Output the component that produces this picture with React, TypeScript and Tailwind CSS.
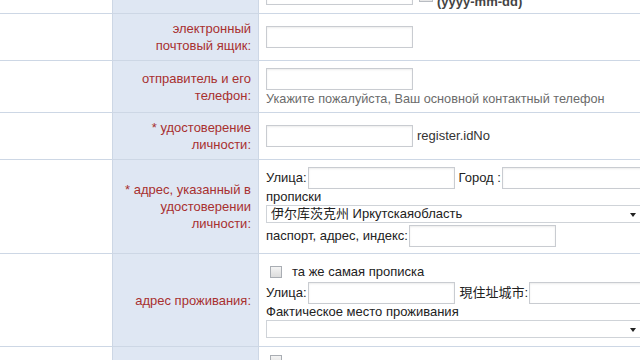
import React from 'react';

const font = { fontFamily: '"Liberation Sans", Arial, "Noto Sans CJK SC", sans-serif' };

const Input: React.FC<{ className?: string }> = ({ className = '' }) => (
  <div className={`h-[22px] w-[147px] shrink-0 border border-[#c9ccd1] bg-white shadow-[inset_0_1px_2px_rgba(0,0,0,0.08)] ${className}`} />
);

const Select: React.FC<{ text?: string }> = ({ text }) => (
  <div className="relative flex h-[18px] w-[376px] shrink-0 items-center border border-[#cfd3d8] bg-white pl-[4px] text-[13px] text-[#222]">
    {text}
    <span className="absolute right-[5px] top-[7px] h-0 w-0 border-x-[3px] border-t-[4px] border-x-transparent border-t-[#222]" />
  </div>
);

const Checkbox: React.FC = () => (
  <div className="h-[12px] w-[12px] shrink-0 border border-[#a9adb3] bg-gradient-to-b from-[#f4f4f4] to-[#dcdcdc]" />
);

const Row: React.FC<{ h: string; label?: React.ReactNode; children?: React.ReactNode; pad?: string }> = ({ h, label, children, pad = 'items-center' }) => (
  <div className={`flex ${h} border-b border-[#cdd7e5]`}>
    <div className="w-[112px] shrink-0 bg-white" />
    <div className="flex w-[147px] shrink-0 items-center justify-end border-l border-r border-[#cdd7e5] bg-[#dfe7f3] pr-[7px] text-right text-[13px] leading-[17px] text-[#a8302f]">
      {label}
    </div>
    <div className={`flex min-w-0 flex-1 overflow-hidden whitespace-nowrap bg-white pl-[7px] ${pad}`}>{children}</div>
  </div>
);

export default function App() {
  return (
    <div className="h-[360px] w-[640px] overflow-hidden bg-white" style={font}>
      {/* partially visible top row */}
      <div className="flex h-[14px] border-b border-[#cdd7e5]">
        <div className="w-[112px] shrink-0 bg-white" />
        <div className="w-[147px] shrink-0 border-l border-r border-[#cdd7e5] bg-[#dfe7f3]" />
        <div className="flex flex-1 items-end overflow-hidden whitespace-nowrap pb-[8px] pl-[7px]">
          <Input />
          <div className="ml-[6px] mb-[3px] h-[9px] w-[14px] border border-[#b8bcc2] bg-[#e8e8e8]" />
          <span className="ml-[4px] mb-[-4px] text-[13px] font-bold leading-[14px] text-[#444]">(yyyy-mm-dd)</span>
        </div>
      </div>

      <Row h="h-[47px]" label={<>электронный<br />почтовый ящик:</>}>
        <Input />
      </Row>

      <Row h="h-[52px]" label={<>отправитель и его<br />телефон:</>} pad="flex-col justify-center items-start">
        <Input className="mt-[2px]" />
        <div className="mt-[2px] text-[12.7px] leading-[15px] text-[#6b6b6b]">Укажите пожалуйста, Ваш основной контактный телефон</div>
      </Row>

      <Row h="h-[47px]" label={<>* удостоверение<br />личности:</>}>
        <Input />
        <span className="ml-[4px] text-[13px] text-[#333]">register.idNo</span>
      </Row>

      <Row h="h-[94px]" label={<>* адрес, указанный в<br />удостоверении<br />личности:</>} pad="flex-col justify-center items-start">
        <div className="flex w-max items-center text-[13px] text-[#222]">
          Улица:<Input className="ml-[1px]" />
          <span className="ml-[4px] mr-[1px]">Город :</span>
          <Input />
        </div>
        <div className="text-[13px] leading-[16px] text-[#222]">прописки</div>
        <Select text="伊尔库茨克州 Иркутскаяобласть" />
        <div className="mt-[2px] flex w-max items-center text-[13px] text-[#222]">
          паспорт, адрес, индекс:<Input className="ml-[1px] h-[21px]" />
        </div>
      </Row>

      <Row h="h-[93px]" label={<>адрес проживания:</>} pad="flex-col justify-center items-start">
        <div className="flex w-max items-center py-[2px] pl-[4px] text-[13px] leading-[16px] text-[#222]">
          <Checkbox />
          <span className="ml-[10px]">та же самая прописка</span>
        </div>
        <div className="flex w-max items-center text-[13px] text-[#222]">
          Улица:<Input className="ml-[1px]" />
          <span className="ml-[5px] mr-[1px]">現住址城市:</span>
          <Input />
        </div>
        <div className="text-[13px] leading-[16px] text-[#222]">Фактическое место проживания</div>
        <Select />
      </Row>

      <Row h="h-[30px]" pad="items-start pt-[8px]">
        <div className="pl-[4px]"><Checkbox /></div>
      </Row>
    </div>
  );
}
